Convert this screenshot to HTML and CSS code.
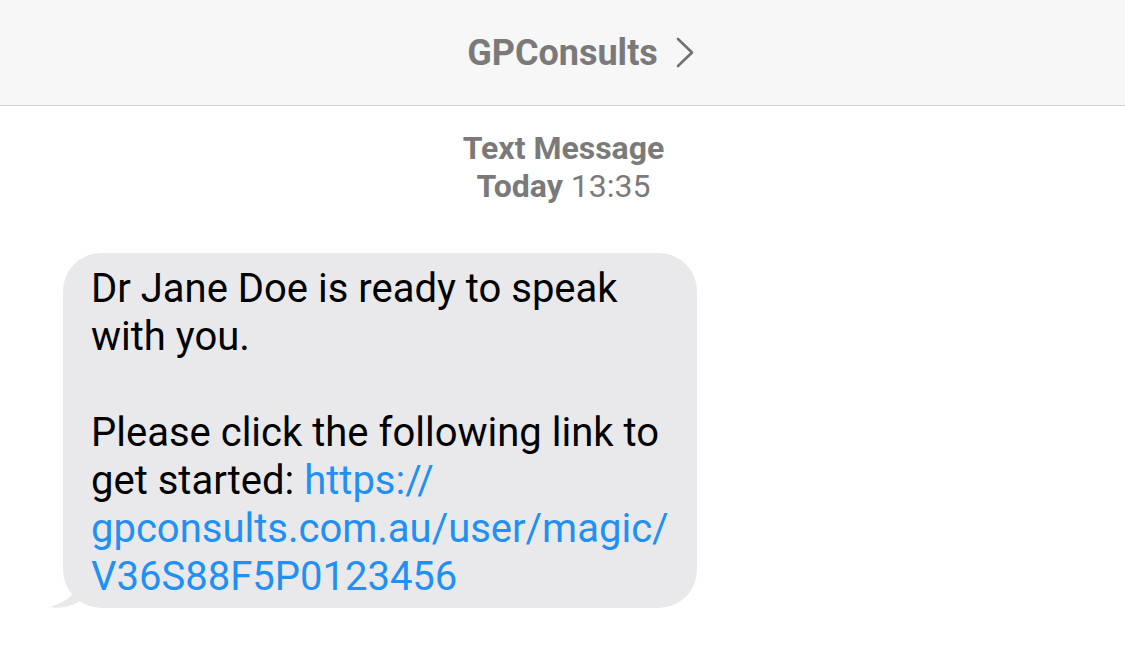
FILE: index.html
```html
<!DOCTYPE html>
<html>
<head>
<meta charset="utf-8">
<link rel="stylesheet" href="styles.css">
</head>
<body>
<header class="topbar">
  <span class="title">GPConsults</span>
  <svg class="chev" width="18" height="31" viewBox="0 0 18 31"><path d="M2 2 L16 15.5 L2 29" fill="none" stroke="#717171" stroke-width="2.6" stroke-linecap="round" stroke-linejoin="round"/></svg>
</header>
<main class="thread">
  <div class="stamp">
    <div class="kind">Text Message</div>
    <div class="when"><b>Today</b> 13:35</div>
  </div>
  <div class="row">
    <div class="bubble">
      <p>Dr Jane Doe is ready to speak with you.</p>
      <p>Please click the following link to get started: <a href="#">https://<br>gpconsults.com.au/user/magic/<br>V36S88F5P0123456</a></p>
      <svg class="tail" width="40" height="30" viewBox="0 0 40 30"><path d="M30 0 C30 12 22 22 2 28 C14 30 24 27 32 22 L40 22 L40 0 Z" fill="#e9e9eb"/></svg>
    </div>
  </div>
</main>
</body>
</html>
```
FILE: styles.css
```css
* { box-sizing: border-box; }
body {
  margin: 0;
  background: #fff;
  font-family: Roboto, "Noto Sans", sans-serif;
}
.topbar {
  height: 106px;
  background: #f7f7f7;
  border-bottom: 1px solid #d4d4d4;
  display: flex;
  align-items: center;
  justify-content: center;
  gap: 18px;
  padding-left: 36px;
}
.title {
  font-size: 36px;
  font-weight: 700;
  color: #7a7a7a;
}
.chev { display: block; }
.thread {
  display: flex;
  flex-direction: column;
}
.stamp {
  text-align: center;
  color: #7a7a7a;
  font-size: 32px;
  line-height: 38px;
  padding-top: 23px;
  padding-left: 2px;
}
.kind { font-weight: 700; }
.when b { font-weight: 700; }
.row {
  padding-top: 48px;
  padding-left: 63px;
}
.bubble {
  position: relative;
  width: 634px;
  background: #e9e9eb;
  border-radius: 38px;
  padding: 12px 18px 7px 28px;
  font-size: 40px;
  line-height: 48px;
  color: #000;
}
.bubble p { margin: 0; }
.bubble p + p { margin-top: 48px; }
.bubble a { color: #2190f5; text-decoration: none; }
.tail {
  position: absolute;
  left: -15px;
  bottom: -1px;
}
```
